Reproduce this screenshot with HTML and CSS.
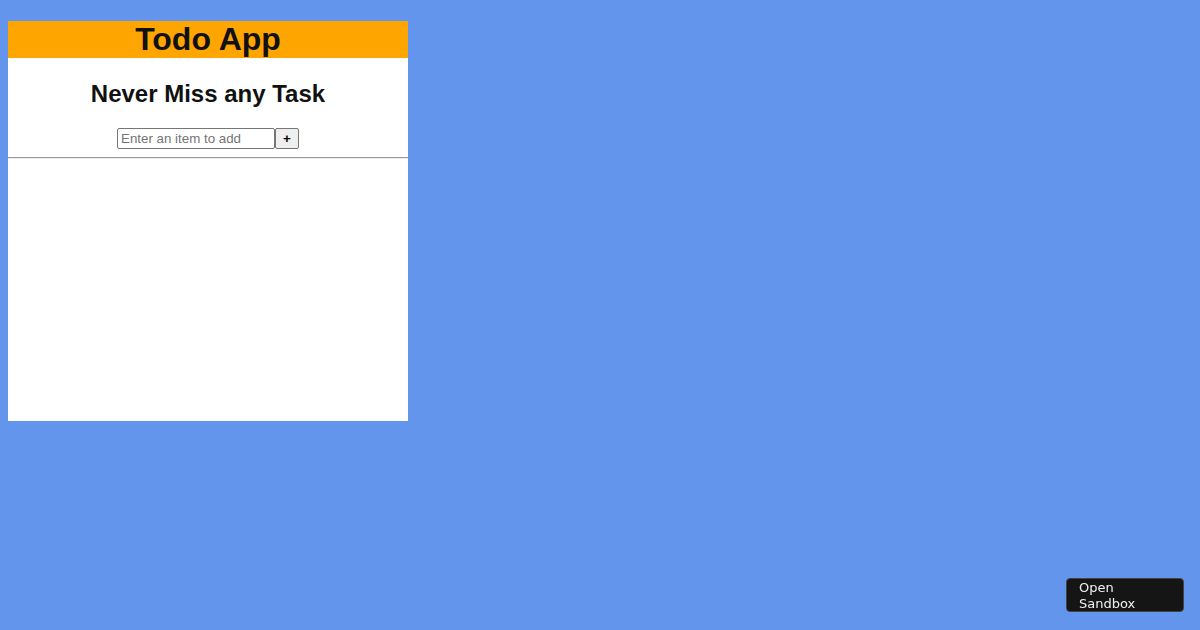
FILE: index.html
```html
<!DOCTYPE html>
<html>
<head>
<meta charset="utf-8">
<link rel="stylesheet" href="styles.css">
</head>
<body>
<div class="app">
  <h1 class="title">Todo App</h1>
  <h2 class="subtitle">Never Miss any Task</h2>
  <div class="add-row">
    <input class="item-input" type="text" placeholder="Enter an item to add"><button class="add-btn">+</button>
  </div>
  <hr class="divider">
</div>
<a class="sandbox-btn">Open Sandbox</a>
</body>
</html>
```
FILE: styles.css
```css
html, body {
  background: #6495ed;
}
body {
  margin: 0 8px;
  font-family: "Liberation Sans", Arial, sans-serif;
  color: #111;
}
.app {
  width: 400px;
  height: 400px;
  background: #fff;
  text-align: center;
}
.title {
  background: #ffa500;
  font-size: 32px;
  font-weight: bold;
  margin: 21px 0 22.4px;
  line-height: 37px;
}
.subtitle {
  font-size: 24px;
  font-weight: bold;
  margin: 19.92px 0;
}
.add-row {
  font-size: 0;
}
.item-input {
  font-family: "Liberation Sans", Arial, sans-serif;
  font-size: 13.333px;
  width: 158px;
  height: 21px;
  box-sizing: border-box;
  padding: 1px 3px;
  border: 1px solid #767676;
  border-radius: 2px;
  vertical-align: top;
  margin: 0;
}
.item-input::placeholder {
  color: #757575;
}
.add-btn {
  font-family: "Liberation Sans", Arial, sans-serif;
  font-size: 13.333px;
  font-weight: bold;
  width: 24px;
  height: 21px;
  box-sizing: border-box;
  padding: 0;
  margin: 0;
  background: #efefef;
  border: 1px solid #767676;
  border-radius: 2px;
  color: #000;
  vertical-align: top;
}
.divider {
  margin: 8px 0 0;
  border: none;
  border-top: 1px solid #9a9a9a;
  border-bottom: 1px solid #eee;
}
.sandbox-btn {
  position: fixed;
  right: 16px;
  bottom: 18px;
  width: 118px;
  height: 34px;
  box-sizing: border-box;
  padding: 1px 12px;
  background: #151515;
  border: 1px solid #444;
  border-radius: 4px;
  color: #f0f0f0;
  font-family: "DejaVu Sans", sans-serif;
  font-size: 13px;
  line-height: 16px;
  text-align: left;
}
```
